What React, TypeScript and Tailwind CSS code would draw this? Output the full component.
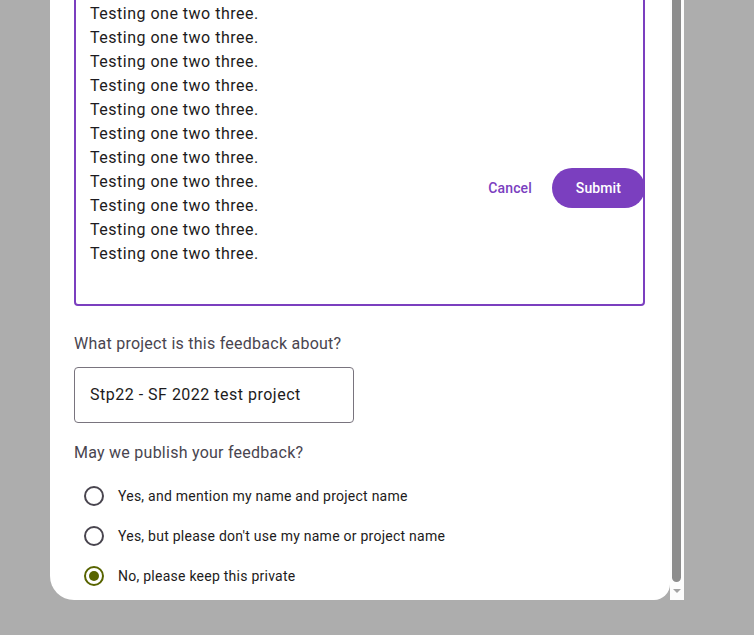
import React from 'react';

const lines = Array.from({ length: 14 }, () => 'Testing one two three.');

const options = [
  { label: 'Yes, and mention my name and project name', checked: false },
  { label: "Yes, but please don't use my name or project name", checked: false },
  { label: 'No, please keep this private', checked: true },
];

const Radio: React.FC<{ checked: boolean }> = ({ checked }) => (
  <div className="flex h-10 w-10 items-center justify-center">
    <div
      className={`flex h-5 w-5 items-center justify-center rounded-full border-2 ${
        checked ? 'border-[#586400]' : 'border-[#49454f]'
      }`}
    >
      {checked && <div className="h-[10px] w-[10px] rounded-full bg-[#586400]" />}
    </div>
  </div>
);

const FeedbackText = () => (
  <div className="relative shrink-0 rounded border-2 border-[#7b3fbf] pb-[38px] pl-[14px] pt-4 text-base leading-6 tracking-[0.5px] text-[#1d1b20]">
    {lines.map((line, i) => (
      <div key={i}>{line}</div>
    ))}
    <div className="absolute bottom-[96px] right-[-2px] flex items-center gap-2 tracking-[0.1px]">
      <button className="h-10 px-3 text-sm font-medium text-[#7b3fbf]">Cancel</button>
      <button className="h-10 rounded-full bg-[#7b3fbf] px-6 text-sm font-medium text-white">
        Submit
      </button>
    </div>
  </div>
);

const Scrollbar = () => (
  <div className="flex w-[14px] flex-col bg-[#fcfcfc]">
    <div className="mx-[2px] w-[9px] flex-1 rounded-b-full bg-[#8c8c8c]" />
    <div className="flex h-[18px] items-center justify-center">
      <div className="h-0 w-0 border-x-[4px] border-t-[4px] border-x-transparent border-t-[#a3a3a3]" />
    </div>
  </div>
);

export default function App() {
  return (
    <div className="min-h-screen bg-[#adadad] font-['Roboto',sans-serif]">
      <div className="ml-[50px] flex h-[600px] w-[634px]">
        <div className="flex w-[620px] flex-col justify-end overflow-hidden rounded-bl-3xl rounded-br-[16px] bg-white pb-1 pl-6 pr-[25px]">
          <FeedbackText />

          <div className="mt-[26px] text-base leading-6 tracking-[0.25px] text-[#49454f]">
            What project is this feedback about?
          </div>
          <div className="mt-[11px] flex h-14 w-[280px] shrink-0 items-center rounded border border-[#79747e] px-[15px] text-base tracking-[0.5px] text-[#1d1b20]">
            Stp22 - SF 2022 test project
          </div>

          <div className="mt-[18px] text-base leading-6 tracking-[0.25px] text-[#49454f]">
            May we publish your feedback?
          </div>
          <div className="mt-[11px] flex flex-col">
            {options.map((o) => (
              <div key={o.label} className="flex h-10 items-center">
                <Radio checked={o.checked} />
                <span className="ml-1 text-sm tracking-[0.25px] text-[#1d1b20]">{o.label}</span>
              </div>
            ))}
          </div>
        </div>
        <Scrollbar />
      </div>
    </div>
  );
}
